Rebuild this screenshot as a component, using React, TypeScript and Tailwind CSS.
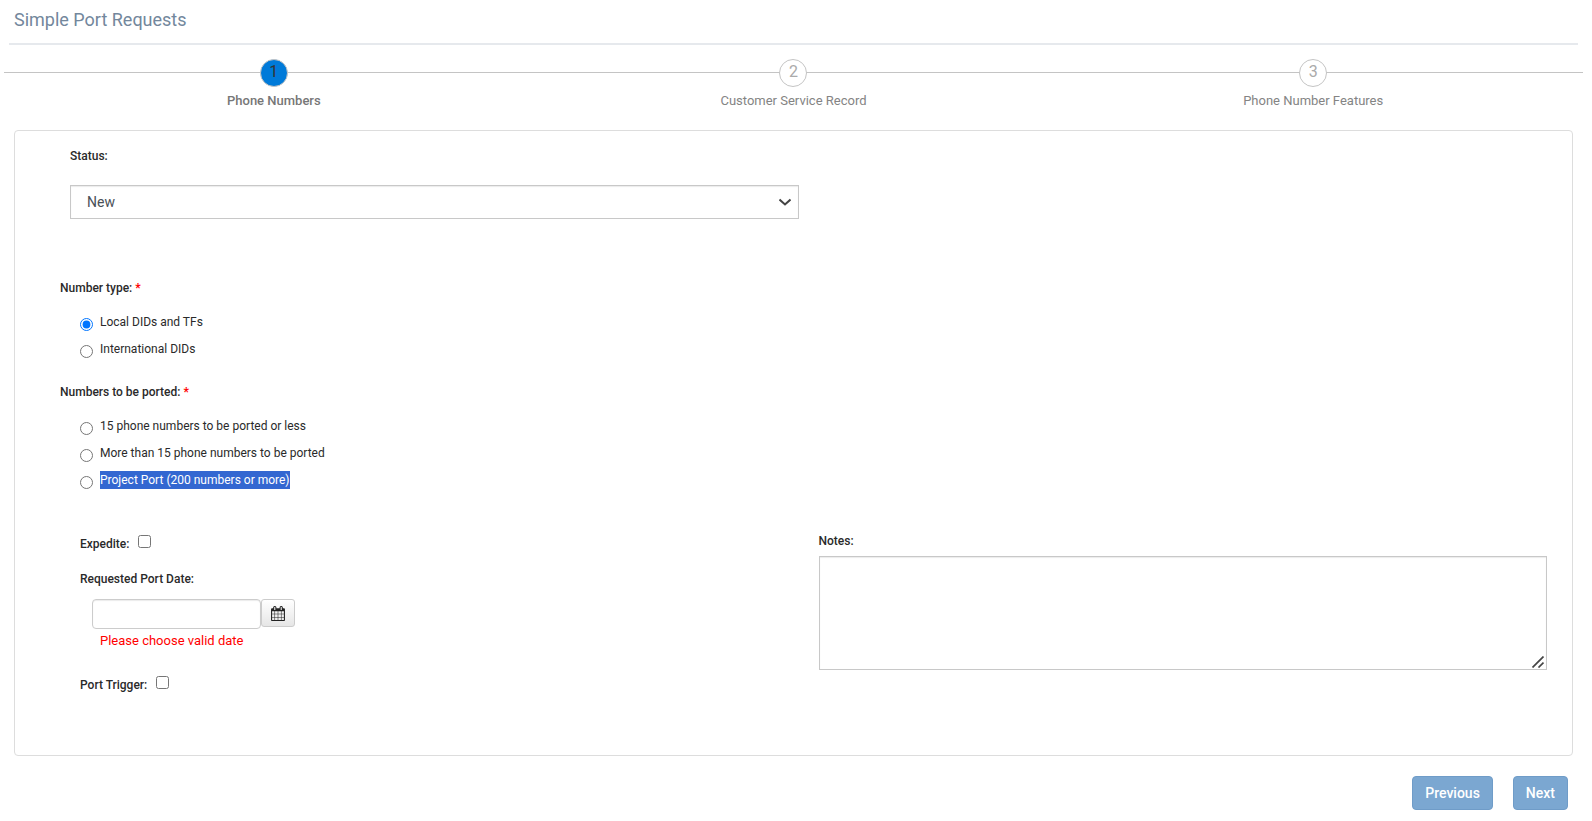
import { useState } from 'react';
import type { ReactNode } from 'react';

const steps = ['Phone Numbers', 'Customer Service Record', 'Phone Number Features'];

const numberTypes = ['Local DIDs and TFs', 'International DIDs'];

const portSizes = [
  '15 phone numbers to be ported or less',
  'More than 15 phone numbers to be ported',
  'Project Port (200 numbers or more)',
];

function CalendarIcon() {
  return (
    <svg width="14" height="15" viewBox="0 0 1664 1792" fill="currentColor" aria-hidden="true">
      <path d="M128 1664h288v-288H128v288zm352 0h320v-288H480v288zM128 1312h288V992H128v320zm352 0h320V992H480v320zM128 928h288V640H128v288zm736 736h320v-288H864v288zM480 928h320V640H480v288zm768 736h288v-288h-288v288zM864 1312h320V992H864v320zM512 448V160q0-13-9.500-22.500T480 128h-64q-13 0-22.500 9.500T384 160v288q0 13 9.500 22.500T416 480h64q13 0 22.500-9.500T512 448zm736 864h288V992h-288v320zM864 928h320V640H864v288zm384 0h288V640h-288v288zm32-480V160q0-13-9.500-22.500T1248 128h-64q-13 0-22.500 9.500T1152 160v288q0 13 9.500 22.500t22.500 9.500h64q13 0 22.500-9.500t9.500-22.500zm384-64v1280q0 52-38 90t-90 38H128q-52 0-90-38t-38-90V384q0-52 38-90t90-38h128v-96q0-66 47-113T416 0h64q66 0 113 47t47 113v96h384v-96q0-66 47-113t113-47h64q66 0 113 47t47 113v96h128q52 0 90 38t38 90z" />
    </svg>
  );
}

function Stepper({ current }: { current: number }) {
  return (
    <nav className="relative mt-3.5 mr-[9px] ml-1 px-2.5">
      <div className="absolute inset-x-0 top-[13px] h-px bg-[#c4c4c4]" />
      <ol className="relative grid grid-cols-3">
        {steps.map((step, i) => (
          <li key={step} className="flex flex-col items-center">
            <span
              className={
                i === current
                  ? 'flex h-7 w-7 justify-center rounded-full border border-[#c4c4c4] bg-[#007ad9] text-base leading-6 text-[#333]'
                  : 'flex h-7 w-7 justify-center rounded-full border border-[#c4c4c4] bg-white text-base leading-6 text-[#aaa]'
              }
            >
              {i + 1}
            </span>
            <span
              className={
                i === current
                  ? 'mt-1 text-[13px] leading-5 font-medium text-[#777]'
                  : 'mt-1 text-[13px] leading-5 text-[#848484]'
              }
            >
              {step}
            </span>
          </li>
        ))}
      </ol>
    </nav>
  );
}

type RadioGroupProps = {
  name: string;
  legend: string;
  options: string[];
  value: string;
  highlighted?: string;
  onChange: (value: string) => void;
};

function RadioGroup({ name, legend, options, value, highlighted, onChange }: RadioGroupProps) {
  return (
    <fieldset>
      <legend className="font-medium">
        {legend} <span className="font-bold text-[#f00]">*</span>
      </legend>
      <div className="mt-4 pl-5">
        {options.map((option) => (
          <label key={option} className="flex h-[27px] items-start gap-[7px]">
            <input
              type="radio"
              name={name}
              className="mt-[5px] h-[13px] w-[13px]"
              checked={value === option}
              onChange={() => onChange(option)}
            />
            <span className={option === highlighted ? 'bg-[#3367d1] text-white' : ''}>{option}</span>
          </label>
        ))}
      </div>
    </fieldset>
  );
}

function CheckField({ id, children }: { id: string; children: ReactNode }) {
  return (
    <div className="flex items-start gap-[9px]">
      <label htmlFor={id} className="font-medium">
        {children}
      </label>
      <input id={id} type="checkbox" className="h-[13px] w-[13px]" />
    </div>
  );
}

export default function App() {
  const [numberType, setNumberType] = useState(numberTypes[0]);
  const [portSize, setPortSize] = useState('');

  return (
    <div className="bg-white pb-2 font-[Roboto,sans-serif] text-xs leading-[18px] text-[#2a2a2a]">
      <header className="mr-3.5 ml-[9px] border-b-2 border-[#e6e9ed] px-[5px] pt-1.5 pb-2.5">
        <h1 className="text-lg leading-[27px] text-[#73879c]">Simple Port Requests</h1>
      </header>

      <Stepper current={0} />

      <main className="mt-[19px] mr-[19px] ml-3.5 rounded border border-[#ddd] pt-4 pr-[15px] pb-[61px] pl-[45px]">
        <section className="grid grid-cols-2">
          <div className="px-2.5">
            <label htmlFor="status" className="block font-medium">
              Status:
            </label>
            <div className="relative mt-5">
              <select
                id="status"
                className="block h-[34px] w-full appearance-none border border-[#c8c8c8] bg-white px-4 text-sm text-[#495057] shadow-[inset_0_1px_1px_rgba(0,0,0,0.08)]"
              >
                <option>New</option>
              </select>
              <svg
                className="pointer-events-none absolute top-[11px] right-2 h-3 w-3"
                viewBox="0 0 12 12"
                fill="none"
                stroke="#444"
                strokeWidth="2"
                aria-hidden="true"
              >
                <path d="M0.500 3.500 6 8.500 11.500 3.500" />
              </svg>
            </div>
          </div>
        </section>

        <div className="mt-[60px]">
          <RadioGroup
            name="number-type"
            legend="Number type:"
            options={numberTypes}
            value={numberType}
            onChange={setNumberType}
          />
        </div>
        <div className="mt-4">
          <RadioGroup
            name="port-size"
            legend="Numbers to be ported:"
            options={portSizes}
            value={portSize}
            highlighted="Project Port (200 numbers or more)"
            onChange={setPortSize}
          />
        </div>

        <section className="mt-[34px] grid grid-cols-2">
          <div className="px-5 pt-[3px]">
            <CheckField id="expedite">Expedite:</CheckField>

            <label htmlFor="port-date" className="mt-[17px] block font-medium">
              Requested Port Date:
            </label>
            <div className="mt-[11px] flex items-start pl-3">
              <input
                id="port-date"
                type="text"
                className="h-[30px] w-[169px] rounded-sm border border-[#ccc] bg-white px-2 shadow-[inset_0_1px_1px_rgba(0,0,0,0.08)]"
              />
              <button
                type="button"
                aria-label="Choose date"
                className="flex h-7 w-[34px] items-center justify-center rounded-[3px] border border-[#ccc] bg-linear-to-b from-white to-[#e6e6e6] text-[#222]"
              >
                <CalendarIcon />
              </button>
            </div>
            <p className="mt-[3px] pl-5 text-[13px] text-[#f00]">Please choose valid date</p>

            <div className="mt-[26px]">
              <CheckField id="port-trigger">Port Trigger:</CheckField>
            </div>
          </div>

          <div className="px-2.5">
            <label htmlFor="notes" className="block font-medium">
              Notes:
            </label>
            <div className="relative mt-1.5">
              <textarea
                id="notes"
                className="block h-[114px] w-full resize-none border border-[#c8c8c8] bg-white p-2 shadow-[inset_0_1px_1px_rgba(0,0,0,0.08)]"
              />
              <svg
                className="pointer-events-none absolute right-[3px] bottom-0.5 h-3 w-3"
                viewBox="0 0 12 12"
                fill="none"
                stroke="#444"
                strokeWidth="1.700"
                aria-hidden="true"
              >
                <path d="M0.500 11.500 11.500 0.500M6.500 11.500 11.500 6.500" />
              </svg>
            </div>
          </div>
        </section>
      </main>

      <footer className="mt-5 mr-6 flex justify-end gap-5 text-sm font-medium text-white">
        <button type="button" className="h-[34px] rounded-sm border border-[#6f9cc8] bg-[#7ba7d1] px-3">
          Previous
        </button>
        <button type="button" className="h-[34px] rounded-sm border border-[#6f9cc8] bg-[#7ba7d1] px-3">
          Next
        </button>
      </footer>
    </div>
  );
}
